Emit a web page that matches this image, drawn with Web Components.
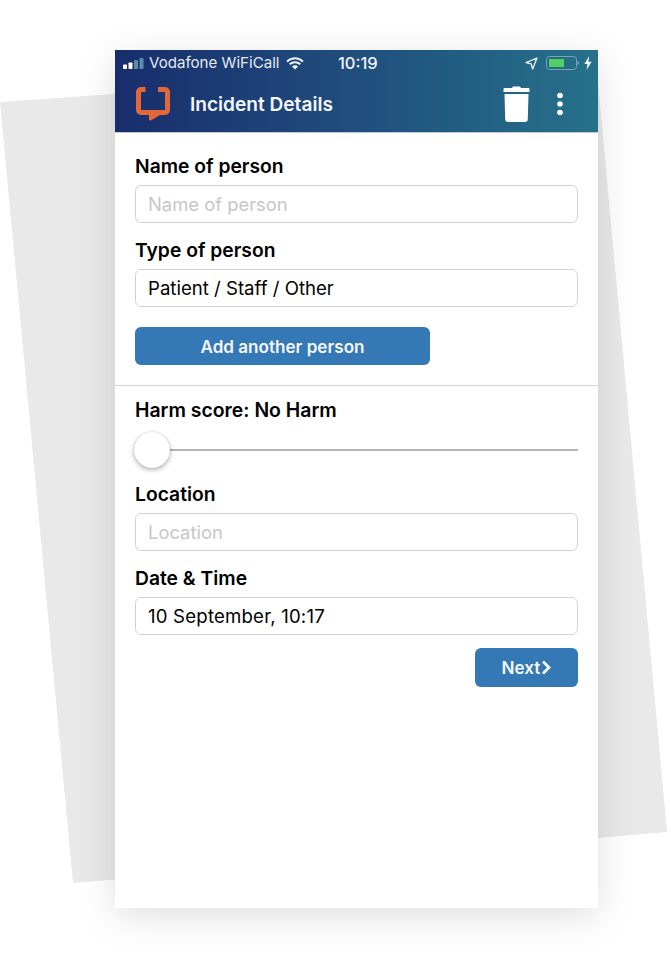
<!DOCTYPE html>
<html lang="en">
<head>
<meta charset="utf-8">
<title>Incident Details</title>
<style>
  html, body { margin: 0; background: #fff; }
  body { font-family: Inter, "Liberation Sans", sans-serif; }
</style>
</head>
<body>
<incident-stage>
  <phone-frame>
    <status-bar slot="top"></status-bar>
    <app-header slot="top" title="Incident Details"></app-header>
    <form-section>
      <form-field label="Name of person" placeholder="Name of person"></form-field>
      <form-field label="Type of person" value="Patient / Staff / Other"></form-field>
      <action-button class="add" label="Add another person"></action-button>
    </form-section>
    <form-section class="second">
      <harm-slider label="Harm score: No Harm"></harm-slider>
      <form-field label="Location" placeholder="Location"></form-field>
      <form-field class="date" label="Date &amp; Time" value="10 September, 10:17"></form-field>
      <action-button class="next" label="Next" chevron></action-button>
    </form-section>
  </phone-frame>
</incident-stage>

<script>
class IncidentStage extends HTMLElement {
    constructor() {
        super();
        this.attachShadow({ mode: 'open' });
    }

    connectedCallback() {
        this.shadowRoot.innerHTML = `
      <style>
        :host {
          display: block;
          position: relative;
          width: 668px;
          height: 978px;
          overflow: hidden;
          padding: 50px 0 0 115px;
          box-sizing: border-box;
        }
        .sheet {
          position: absolute;
          left: 0;
          top: 0;
        }
      </style>
      <svg class="sheet" width="668" height="978" viewBox="0 0 668 978">
        <polygon points="0,102 596,60 667,832 73,883" fill="#e9e9e9"/>
      </svg>
      <slot></slot>
    `;
    }
}

class PhoneFrame extends HTMLElement {
    constructor() {
        super();
        this.attachShadow({ mode: 'open' });
    }

    connectedCallback() {
        this.shadowRoot.innerHTML = `
      <style>
        :host {
          display: block;
          position: relative;
          width: 483px;
          height: 858px;
          background: #fff;
          box-shadow: 0 8px 36px rgba(0, 0, 0, 0.13);
        }
        .top {
          background: linear-gradient(90deg, #182d6c 0%, #1f4b7c 45%, #26718a 100%);
          border-bottom: 1px solid #bfc9d2;
        }
      </style>
      <div class="top"><slot name="top"></slot></div>
      <slot></slot>
    `;
    }
}

class StatusBar extends HTMLElement {
    constructor() {
        super();
        this.attachShadow({ mode: 'open' });
    }

    connectedCallback() {
        this.shadowRoot.innerHTML = `
      <style>
        :host {
          display: flex;
          align-items: center;
          height: 26px;
          padding: 0 6px 0 8px;
          color: #e4e9f0;
          font-size: 15.1px;
          line-height: 26px;
          position: relative;
        }
        .left, .right { display: flex; align-items: center; }
        .carrier { margin-left: 5px; }
        .wifi { margin-left: 7px; }
        .time {
          position: absolute;
          left: 223px;
          font-weight: 500;
          font-size: 16.5px;
          color: #f2f4f7;
        }
        .right { margin-left: auto; }
        .battery { margin-left: 8px; }
        .bolt { margin-left: 5px; }
      </style>
      <div class="left">
        <svg width="21" height="11" viewBox="0 0 21 11">
          <rect x="0" y="6.500" width="4" height="4.500" rx=".7" fill="#fff"/>
          <rect x="5.500" y="4.500" width="4" height="6.500" rx=".7" fill="#fff"/>
          <rect x="11" y="2" width="4" height="9" rx=".7" fill="#5f8cab"/>
          <rect x="16.500" y="0" width="4" height="11" rx=".7" fill="#5f8cab"/>
        </svg>
        <span class="carrier">Vodafone WiFiCall</span>
        <svg class="wifi" width="18" height="13" viewBox="0 0 18 13">
          <path d="M1 4.600a11.400 11.400 0 0 1 16 0M3.700 7.300a7.600 7.600 0 0 1 10.600 0" fill="none" stroke="#f2f4f7" stroke-width="2"/>
          <path d="M6 9.600a4.200 4.200 0 0 1 6 0L9 12.600z" fill="#f2f4f7"/>
        </svg>
      </div>
      <span class="time">10:19</span>
      <div class="right">
        <svg width="13" height="13" viewBox="0 0 13 13">
          <path d="M12 1 1 5.600l5.200 1.200L7.600 12z" fill="none" stroke="#eef2f5" stroke-width="1.300" stroke-linejoin="round"/>
        </svg>
        <svg class="battery" width="33" height="14" viewBox="0 0 33 14">
          <rect x=".5" y=".5" width="30" height="13" rx="3" fill="none" stroke="#7fa3b4"/>
          <rect x="3" y="3" width="15" height="8" fill="#4fd163"/>
          <path d="M31.500 5l1.500 1v2L31.500 9z" fill="#7fa3b4"/>
        </svg>
        <svg class="bolt" width="8" height="14" viewBox="0 0 8 14">
          <path d="M5.200 0 .4 8h3L2.600 14l5-8.200H4.400z" fill="#f2f4f7"/>
        </svg>
      </div>
    `;
    }
}

class AppHeader extends HTMLElement {
    constructor() {
        super();
        this.attachShadow({ mode: 'open' });
    }

    connectedCallback() {
        const title = this.getAttribute('title') || '';
        this.shadowRoot.innerHTML = `
      <style>
        :host {
          display: flex;
          align-items: center;
          height: 56px;
          padding: 0 34px 0 21px;
          color: #f4f6f8;
        }
        .title {
          margin-left: 20px;
          font-size: 19.1px;
          font-weight: 600;
          flex: 1;
        }
        .trash { margin-right: 26px; }
      </style>
      <svg width="34" height="34" viewBox="0 0 34 34">
        <path d="M9.500 2.500H5A2.500 2.500 0 0 0 2.500 5v18A2.500 2.500 0 0 0 5 25.500h8M22 2.500h7A2.500 2.500 0 0 1 31.500 5v18a2.500 2.500 0 0 1-2.500 2.500h-8" fill="none" stroke="#e4673a" stroke-width="5"/>
        <path d="M13 23h11v5l-9 5.500-2-.5z" fill="#e4673a"/>
      </svg>
      <span class="title">${title}</span>
      <svg class="trash" width="27" height="36" viewBox="0 0 27 36">
        <path d="M9 2 10 .5h7L18 2h7.500a1 1 0 0 1 1 1V6H.5V3a1 1 0 0 1 1-1z" fill="#fff"/>
        <path d="M1.500 8h24l-.7 25a3 3 0 0 1-3 3H5.200a3 3 0 0 1-3-3z" fill="#fff"/>
      </svg>
      <svg width="8" height="24" viewBox="0 0 8 24">
        <circle cx="4" cy="3.500" r="2.800" fill="#fff"/>
        <circle cx="4" cy="12" r="2.800" fill="#fff"/>
        <circle cx="4" cy="20.500" r="2.800" fill="#fff"/>
      </svg>
    `;
    }
}

class FormSection extends HTMLElement {
    constructor() {
        super();
        this.attachShadow({ mode: 'open' });
    }

    connectedCallback() {
        this.shadowRoot.innerHTML = `
      <style>
        :host {
          display: flex;
          flex-direction: column;
          padding: 20px;
          gap: 14px;
        }
        :host(.second) {
          border-top: 1px solid #d4d4d4;
          padding-top: 11px;
        }
      </style>
      <slot></slot>
    `;
    }
}

class FormField extends HTMLElement {
    constructor() {
        super();
        this.attachShadow({ mode: 'open' });
    }

    connectedCallback() {
        const label = this.getAttribute('label') || '';
        const value = this.getAttribute('value') || '';
        const placeholder = this.getAttribute('placeholder') || '';
        this.shadowRoot.innerHTML = `
      <style>
        :host {
          display: block;
          color: #000;
        }
        .label {
          font-size: 19.3px;
          font-weight: 600;
          line-height: 26px;
          margin-bottom: 6px;
        }
        .box {
          height: 38px;
          box-sizing: border-box;
          border: 1px solid #d2d2d2;
          border-radius: 6px;
          padding: 0 12px;
          font-size: 18.6px;
          line-height: 37px;
          background: #fff;
        }
        .box.empty { color: #c7c7c7; font-size: 18.4px; }
        :host(.date) .box { letter-spacing: 0.2px; }
      </style>
      <div class="label">${label}</div>
      <div class="box ${value ? '' : 'empty'}">${value || placeholder}</div>
    `;
    }
}

class ActionButton extends HTMLElement {
    constructor() {
        super();
        this.attachShadow({ mode: 'open' });
    }

    connectedCallback() {
        const label = this.getAttribute('label') || '';
        const chevron = this.hasAttribute('chevron');
        this.shadowRoot.innerHTML = `
      <style>
        :host {
          display: flex;
          align-items: center;
          justify-content: center;
          height: 38px;
          background: #3478b5;
          color: #f4f7fa;
          border-radius: 6px;
          font-size: 17.100px;
          font-weight: 600;
        }
        :host(.add) { width: 295px; margin-top: 6px; }
        :host(.next) { width: 103px; height: 39px; align-self: flex-end; margin-top: -1px; }
        svg { margin-left: 2px; }
      </style>
      <span>${label}</span>
      ${chevron ? `<svg width="9" height="15" viewBox="0 0 9 15"><path d="M1 1.500 7 7.500 1 13.500" fill="none" stroke="#f4f7fa" stroke-width="2.800"/></svg>` : ''}
    `;
    }
}

class HarmSlider extends HTMLElement {
    constructor() {
        super();
        this.attachShadow({ mode: 'open' });
    }

    connectedCallback() {
        const label = this.getAttribute('label') || '';
        this.shadowRoot.innerHTML = `
      <style>
        :host {
          display: block;
          color: #000;
        }
        .label {
          font-size: 19.4px;
          font-weight: 600;
          line-height: 26px;
        }
        .track {
          position: relative;
          height: 2px;
          margin: 26px 0 16px;
          background: #b4b4b4;
        }
        .thumb {
          position: absolute;
          left: -1px;
          top: -17px;
          width: 36px;
          height: 36px;
          border-radius: 50%;
          background: #fff;
          box-shadow: 0 2px 5px rgba(0, 0, 0, 0.3), 0 0 1px rgba(0, 0, 0, 0.25);
        }
      </style>
      <div class="label">${label}</div>
      <div class="track"><div class="thumb"></div></div>
    `;
    }
}

customElements.define('incident-stage', IncidentStage);
customElements.define('phone-frame', PhoneFrame);
customElements.define('status-bar', StatusBar);
customElements.define('app-header', AppHeader);
customElements.define('form-section', FormSection);
customElements.define('form-field', FormField);
customElements.define('action-button', ActionButton);
customElements.define('harm-slider', HarmSlider);
</script>
</body>
</html>
